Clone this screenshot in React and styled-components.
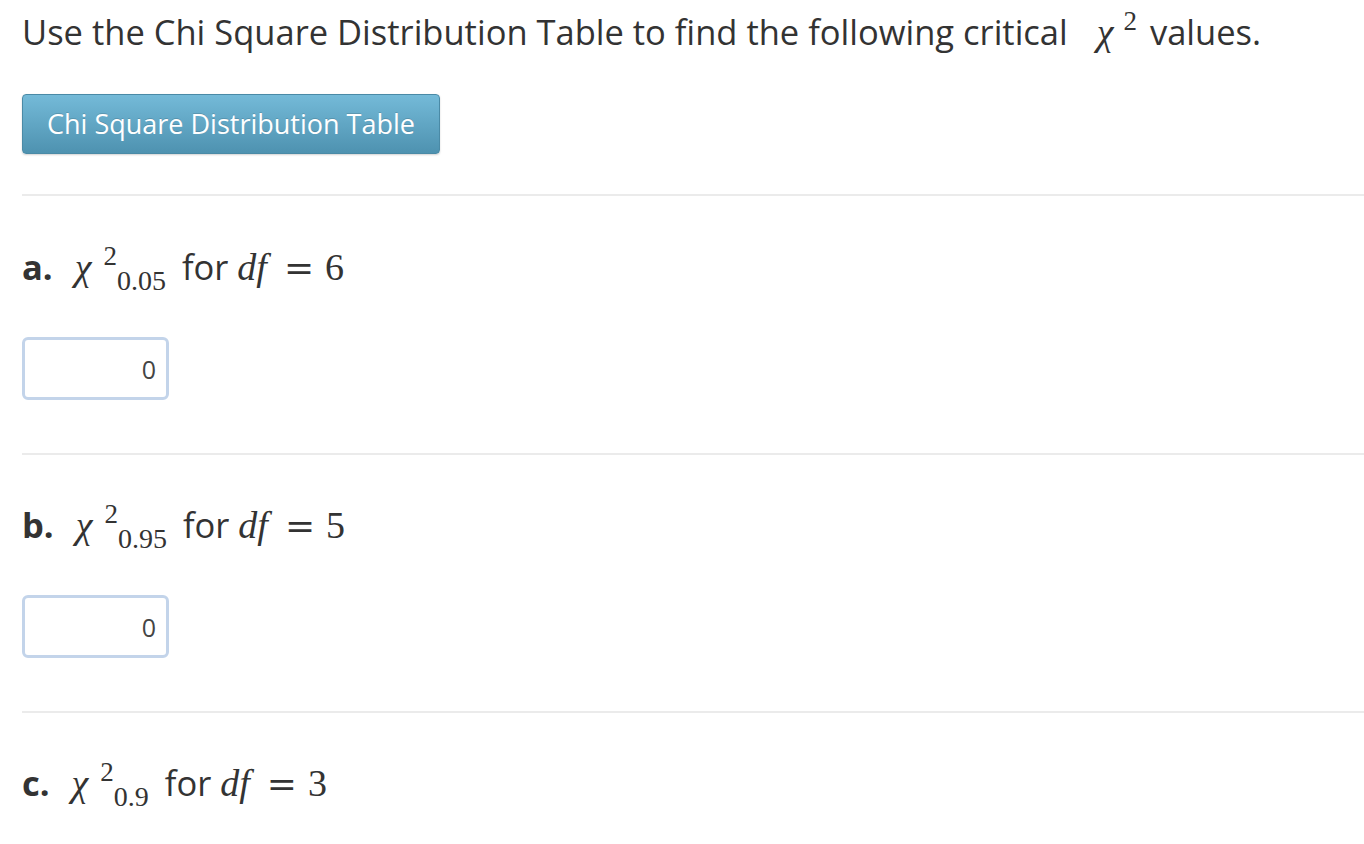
import React from "react";
import styled, { createGlobalStyle } from "styled-components";

const Global = createGlobalStyle`
  html, body { margin: 0; padding: 0; background: #fff; overflow: hidden; }
  body { font-family: "Open Sans", "Liberation Sans", sans-serif; color: #333; }
`;

const Page = styled.div`
  box-sizing: border-box;
  width: 1364px;
  min-height: 844px;
  padding: 10px 0 60px 22px;
`;

const Heading = styled.p`
  margin: 0;
  font-size: 34.5px;
  line-height: 44px;
  height: 44px;
  color: #333;
  white-space: nowrap;
`;

const TableButton = styled.button`
  margin-top: 40px;
  display: block;
  width: 418px;
  height: 60px;
  border: 1px solid #4a8aa6;
  border-radius: 4px;
  background: linear-gradient(to bottom, #74bad8, #4e92b0);
  color: #fff;
  font-family: "Open Sans", sans-serif;
  font-size: 27px;
  padding: 0 0 2px 0;
  box-shadow: 0 1px 2px rgba(0, 0, 0, 0.18);
  text-shadow: 0 -1px 0 rgba(0, 0, 0, 0.15);
`;

const Divider = styled.hr`
  margin: ${p => p.$top}px 0 0 0;
  border: 0;
  height: 2px;
  background: #ebebeb;
`;

const Section = styled.div`
  padding-top: ${p => p.$top}px;
`;

const Label = styled.div`
  font-size: 34.5px;
  line-height: 44px;
  height: 44px;
  white-space: nowrap;
  color: #333;
`;

const Letter = styled.b`
  font-weight: 700;
  margin-right: 22px;
`;

const MathText = styled.span`
  font-family: "Liberation Serif", "Times New Roman", serif;
  font-style: ${p => (p.$italic ? "italic" : "normal")};
  font-size: 38px;
  line-height: 0;
`;

const Rel = styled.span`
  font-family: "DejaVu Serif", "Liberation Serif", serif;
  font-size: 36px;
  line-height: 0;
  margin: 0 11px 0 17px;
`;

const Chi = styled.span`
  font-family: "Liberation Serif", serif;
  font-style: italic;
  font-size: 38px;
  line-height: 0;
  margin-left: ${p => p.$ml || 0}px;
`;

const Sup = styled.span`
  font-family: "Liberation Serif", serif;
  font-size: 27px;
  line-height: 0;
  vertical-align: 15px;
  margin-left: ${p => p.$ml}px;
  margin-right: ${p => p.$mr}px;
`;

const Sub = styled.span`
  font-family: "Liberation Serif", serif;
  font-size: 28px;
  line-height: 0;
  vertical-align: -10px;
  margin-right: 16px;
`;

const NumInput = styled.input`
  margin-top: 48px;
  display: block;
  box-sizing: border-box;
  width: 147px;
  height: 63px;
  border: 3px solid #c3d4ea;
  border-radius: 6px;
  text-align: right;
  padding: 0 10px 0 12px;
  font-family: "Open Sans", sans-serif;
  font-size: 25px;
  color: #444;
  outline: none;
  background: #fff;
`;

const Item = ({ letter, sub, df, input, top }) => (
  <Section $top={top}>
    <Label>
      <Letter>{letter}</Letter>
      <Chi>χ</Chi>
      <Sup $ml={12} $mr={0}>2</Sup>
      <Sub>{sub}</Sub>
      for <MathText $italic>df</MathText>
      <Rel>=</Rel>
      <MathText>{df}</MathText>
    </Label>
    {input && <NumInput defaultValue="0" />}
  </Section>
);

export default function App() {
  return (
    <Page>
      <Global />
      <Heading>
        Use the Chi Square Distribution Table to find the following critical
        <Chi $ml={29}>χ</Chi>
        <Sup $ml={10} $mr={13}>2</Sup>values.
      </Heading>
      <TableButton>Chi Square Distribution Table</TableButton>
      <Divider $top={40} />
      <Item letter="a." sub="0.05" df="6" top={49} input />
      <Divider $top={53} />
      <Item letter="b." sub="0.95" df="5" top={48} input />
      <Divider $top={53} />
      <Item letter="c." sub="0.9" df="3" top={48} />
    </Page>
  );
}
